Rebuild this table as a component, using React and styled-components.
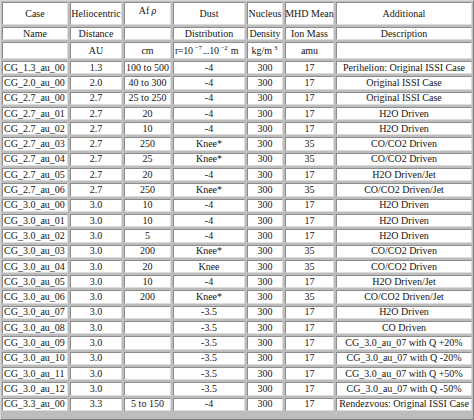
import React from "react";
import styled, { createGlobalStyle } from "styled-components";

const Global = createGlobalStyle`
  html, body { margin: 0; padding: 0; background: #ffffff; }
  body { font-family: "Liberation Serif", "Times New Roman", serif; }
`;

const Grid = styled.div`
  box-sizing: border-box;
  width: 474px;
  height: 420px;
  display: grid;
  grid-template-columns: 66px 52px 47px 72px 36px 49px 136px;
  grid-template-rows: 23px 13px 17px repeat(23, 13.3px);
  gap: 2px;
  align-content: start;
  padding: 1px;
  background: #bdbdbd;
  border: 1px solid;
  border-color: #d6d6d6 #808080 #808080 #d6d6d6;
  font-family: "Liberation Serif", "Times New Roman", serif;
  font-size: 10px;
  color: #151515;
`;

const Cell = styled.div`
  box-sizing: border-box;
  background: #ffffff;
  border: 1px solid;
  border-color: #8c8c8c #dcdcdc #dcdcdc #8c8c8c;
  display: flex;
  align-items: ${(p) => (p.$top ? "flex-start" : "center")};
  justify-content: ${(p) => (p.$left ? "flex-start" : "center")};
  padding: ${(p) => (p.$top ? "3px 0 0 0" : p.$left ? "0 0 0 1px" : "0")};
  white-space: nowrap;
  overflow: visible;
  line-height: 1;
`;

const Text = styled.span`
  display: block;
  line-height: 1;
  letter-spacing: ${(p) => (p.$tight ? "-0.3px" : "0")};
`;

const Sup = styled.sup`
  font-size: 7px;
  line-height: 0;
  vertical-align: 4px;
  margin: 0 1px 0 2px;
`;

const Rho = styled.i`
  font-style: italic;
  margin-left: 2px;
`;

const rows = [
  ["CG_1.3_au_00", "1.3", "100 to 500", "-4", "300", "17", "Perihelion: Original ISSI Case"],
  ["CG_2.0_au_00", "2.0", "40 to 300", "-4", "300", "17", "Original ISSI Case"],
  ["CG_2.7_au_00", "2.7", "25 to 250", "-4", "300", "17", "Original ISSI Case"],
  ["CG_2.7_au_01", "2.7", "20", "-4", "300", "17", "H2O Driven"],
  ["CG_2.7_au_02", "2.7", "10", "-4", "300", "17", "H2O Driven"],
  ["CG_2.7_au_03", "2.7", "250", "Knee*", "300", "35", "CO/CO2 Driven"],
  ["CG_2.7_au_04", "2.7", "25", "Knee*", "300", "35", "CO/CO2 Driven"],
  ["CG_2.7_au_05", "2.7", "20", "-4", "300", "17", "H2O Driven/Jet"],
  ["CG_2.7_au_06", "2.7", "250", "Knee*", "300", "35", "CO/CO2 Driven/Jet"],
  ["CG_3.0_au_00", "3.0", "10", "-4", "300", "17", "H2O Driven"],
  ["CG_3.0_au_01", "3.0", "10", "-4", "300", "17", "H2O Driven"],
  ["CG_3.0_au_02", "3.0", "5", "-4", "300", "17", "H2O Driven"],
  ["CG_3.0_au_03", "3.0", "200", "Knee*", "300", "35", "CO/CO2 Driven"],
  ["CG_3.0_au_04", "3.0", "20", "Knee", "300", "35", "CO/CO2 Driven"],
  ["CG_3.0_au_05", "3.0", "10", "-4", "300", "17", "H2O Driven/Jet"],
  ["CG_3.0_au_06", "3.0", "200", "Knee*", "300", "35", "CO/CO2 Driven/Jet"],
  ["CG_3.0_au_07", "3.0", "", "-3.5", "300", "17", "H2O Driven"],
  ["CG_3.0_au_08", "3.0", "", "-3.5", "300", "17", "CO Driven"],
  ["CG_3.0_au_09", "3.0", "", "-3.5", "300", "17", "CG_3.0_au_07 with Q +20%"],
  ["CG_3.0_au_10", "3.0", "", "-3.5", "300", "17", "CG_3.0_au_07 with Q -20%"],
  ["CG_3.0_au_11", "3.0", "", "-3.5", "300", "17", "CG_3.0_au_07 with Q +50%"],
  ["CG_3.0_au_12", "3.0", "", "-3.5", "300", "17", "CG_3.0_au_07 with Q -50%"],
  ["CG_3.3_au_00", "3.3", "5 to 150", "-4", "300", "17", "Rendezvous: Original ISSI Case"],
];

export default function App() {
  return (
    <>
      <Global />
      <Grid>
        <Cell><Text>Case</Text></Cell>
        <Cell><Text>Heliocentric</Text></Cell>
        <Cell $top>
          <Text>Af<Rho>ρ</Rho></Text>
        </Cell>
        <Cell><Text>Dust</Text></Cell>
        <Cell><Text>Nucleus</Text></Cell>
        <Cell><Text>MHD Mean</Text></Cell>
        <Cell><Text>Additional</Text></Cell>

        <Cell><Text>Name</Text></Cell>
        <Cell><Text>Distance</Text></Cell>
        <Cell />
        <Cell><Text>Distribution</Text></Cell>
        <Cell><Text>Density</Text></Cell>
        <Cell><Text>Ion Mass</Text></Cell>
        <Cell><Text>Description</Text></Cell>

        <Cell />
        <Cell><Text>AU</Text></Cell>
        <Cell><Text>cm</Text></Cell>
        <Cell $left>
          <Text $tight>
            r=10<Sup>−7</Sup>...10<Sup>−2</Sup> m
          </Text>
        </Cell>
        <Cell>
          <Text>kg/m<Sup>3</Sup></Text>
        </Cell>
        <Cell><Text>amu</Text></Cell>
        <Cell />

        {rows.map((r) =>
          r.map((v, i) => (
            <Cell key={r[0] + i} $left={i === 0}>
              <Text>{v}</Text>
            </Cell>
          ))
        )}
      </Grid>
    </>
  );
}
